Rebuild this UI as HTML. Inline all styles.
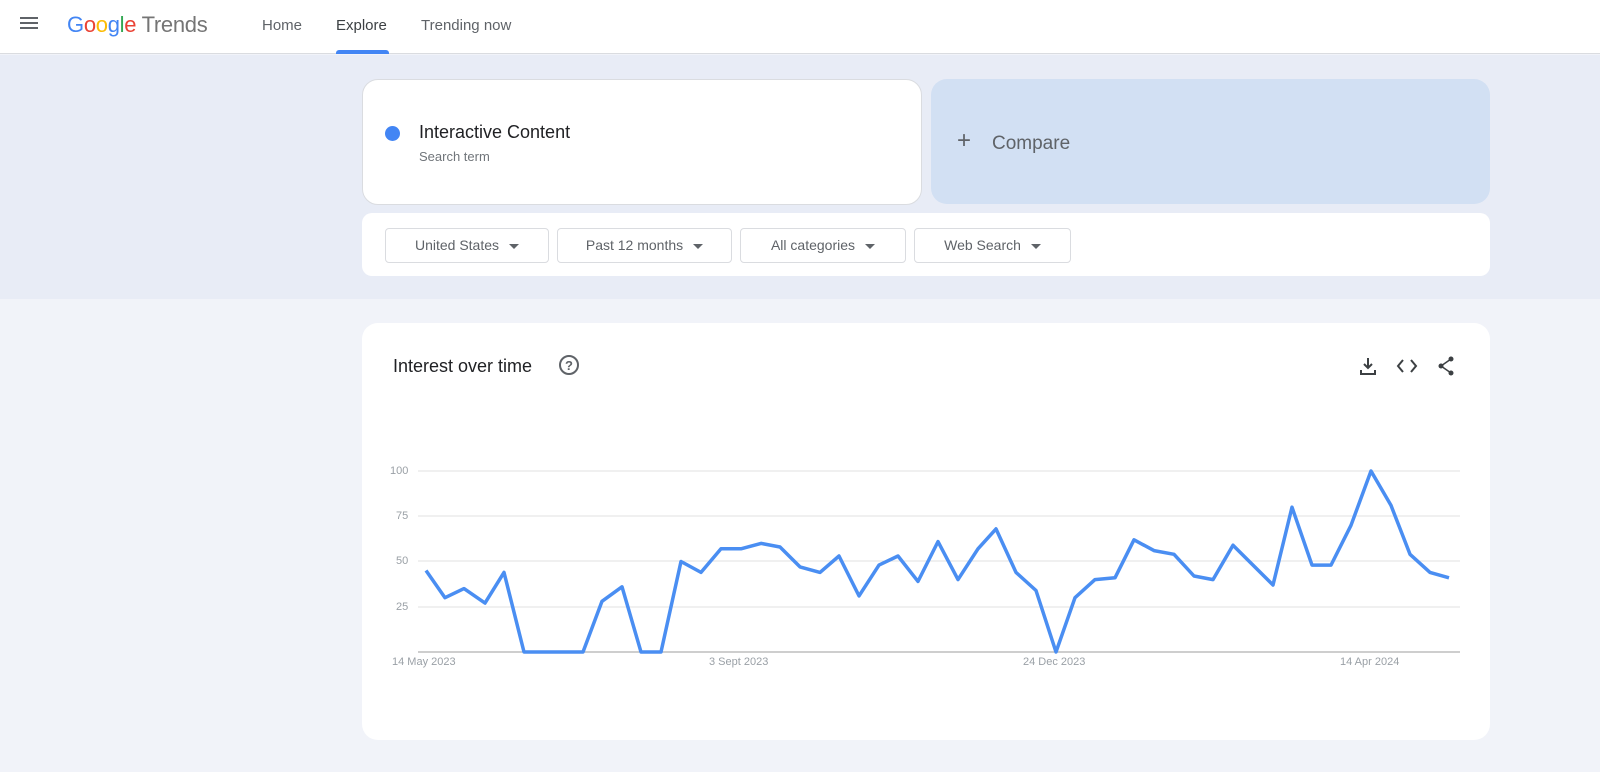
<!DOCTYPE html>
<html><head><meta charset="utf-8"><style>
*{box-sizing:border-box;margin:0;padding:0}
body{width:1600px;height:772px;overflow:hidden;background:#f1f3f9;font-family:"Liberation Sans",Arial,sans-serif;position:relative}
.hdr{position:absolute;top:0;left:0;width:1600px;height:54px;background:#fff;border-bottom:1px solid #dadce0}
.band{position:absolute;top:55px;left:0;width:1600px;height:244px;background:#e8ecf6}
.card{position:absolute;background:#fff;border-radius:16px}
.nav{position:absolute;top:17px;font-size:15px;color:#5f6368}
.dd{position:absolute;top:228px;height:35px;border:1px solid #dadce0;border-radius:4px;font-size:14px;color:#5f6368;line-height:33px;text-align:center}
.dd:after{content:"";display:inline-block;margin-left:10px;border-left:5px solid transparent;border-right:5px solid transparent;border-top:5px solid #5f6368;vertical-align:middle}
.ax{position:absolute;font-size:11px;color:#9aa0a6}
</style></head><body>
<div class="hdr">
<div style="position:absolute;left:20px;top:17px;width:18px;height:2px;background:#5f6368;box-shadow:0 5px 0 #5f6368,0 10px 0 #5f6368"></div>
<div style="position:absolute;left:67px;top:12px;font-size:22px;letter-spacing:-0.3px"><span style="color:#4285f4">G</span><span style="color:#ea4335">o</span><span style="color:#fbbc05">o</span><span style="color:#4285f4">g</span><span style="color:#34a853">l</span><span style="color:#ea4335">e</span><span style="color:#757575"> Trends</span></div>
<div class="nav" style="left:262px">Home</div>
<div class="nav" style="left:336px;color:#3c4043">Explore</div>
<div style="position:absolute;left:336px;top:50px;width:53px;height:4px;background:#4285f4;border-radius:3px 3px 0 0"></div>
<div class="nav" style="left:421px">Trending now</div>
</div>
<div class="band"></div>
<div class="card" style="left:362px;top:79px;width:560px;height:126px;border:1px solid #dadce0">
<div style="position:absolute;left:22px;top:46px;width:15px;height:15px;border-radius:50%;background:#4285f4"></div>
<div style="position:absolute;left:56px;top:42px;font-size:18px;color:#202124">Interactive Content</div>
<div style="position:absolute;left:56px;top:69px;font-size:13px;color:#70757a">Search term</div>
</div>
<div class="card" style="left:931px;top:79px;width:559px;height:125px;background:#d2e0f3">
<div style="position:absolute;left:26px;top:50px;font-size:24px;color:#5f6368;line-height:24px">+</div>
<div style="position:absolute;left:61px;top:54px;font-size:19px;color:#5f6368">Compare</div>
</div>
<div class="card" style="left:362px;top:213px;width:1128px;height:63px;border-radius:10px"></div>
<div class="dd" style="left:385px;width:164px">United States</div>
<div class="dd" style="left:557px;width:175px">Past 12 months</div>
<div class="dd" style="left:740px;width:166px">All categories</div>
<div class="dd" style="left:914px;width:157px">Web Search</div>
<div class="card" style="left:362px;top:323px;width:1128px;height:417px"></div>
<div style="position:absolute;left:393px;top:356px;font-size:18px;color:#202124">Interest over time</div>
<svg style="position:absolute;left:0;top:0" width="1600" height="772">
<circle cx="569" cy="365" r="9" fill="none" stroke="#5f6368" stroke-width="2"/>
<text x="569" y="370" font-size="13" font-weight="bold" fill="#5f6368" text-anchor="middle" font-family="Liberation Sans">?</text>
<path d="M1368 358v10m-4-4l4 4 4-4M1361 370v4h14v-4" fill="none" stroke="#3c4043" stroke-width="2"/>
<path d="M1403 360l-5 6 5 6M1411 360l5 6-5 6" fill="none" stroke="#3c4043" stroke-width="2"/>
<circle cx="1451" cy="359" r="2.5" fill="#3c4043"/><circle cx="1441" cy="366" r="2.5" fill="#3c4043"/><circle cx="1451" cy="373" r="2.5" fill="#3c4043"/>
<path d="M1451 359l-10 7 10 7" fill="none" stroke="#3c4043" stroke-width="1.5"/>
<g stroke="#e0e0e0" stroke-width="1"><line x1="418" y1="471" x2="1460" y2="471"/><line x1="418" y1="516" x2="1460" y2="516"/><line x1="418" y1="561" x2="1460" y2="561"/><line x1="418" y1="607" x2="1460" y2="607"/></g>
<line x1="418" y1="652" x2="1460" y2="652" stroke="#9e9e9e"/>
<polyline fill="none" stroke="#4a8ef2" stroke-width="3.5" stroke-linejoin="round" points="426,570.5 445,597.7 464,588.6 485,603.1 504,572.4 524,652 544,652 563,652 583,652 602,601.3 622,586.8 641,652 661,652 681,561.5 701,572.4 721,548.8 741,548.8 761,543.4 780,547 800,566.9 820,572.4 839,556 859,595.9 879,565.1 898,556 918,581.4 938,541.6 958,579.6 978,548.8 996,528.9 1016,572.4 1036,590.5 1056,652 1075,597.7 1095,579.6 1115,577.8 1134,539.8 1154,550.6 1174,554.3 1194,576 1213,579.6 1233,545.2 1253,565.1 1273,585 1292,507.2 1312,565.1 1331,565.1 1351,525.3 1371,471 1391,505.4 1410,554.3 1430,572.4 1449,577.8"/>
</svg>
<div class="ax" style="left:390px;top:465px">100</div>
<div class="ax" style="left:396px;top:510px">75</div>
<div class="ax" style="left:396px;top:555px">50</div>
<div class="ax" style="left:396px;top:601px">25</div>
<div class="ax" style="left:392px;top:656px">14 May 2023</div>
<div class="ax" style="left:709px;top:656px">3 Sept 2023</div>
<div class="ax" style="left:1023px;top:656px">24 Dec 2023</div>
<div class="ax" style="left:1340px;top:656px">14 Apr 2024</div>
</body></html>
